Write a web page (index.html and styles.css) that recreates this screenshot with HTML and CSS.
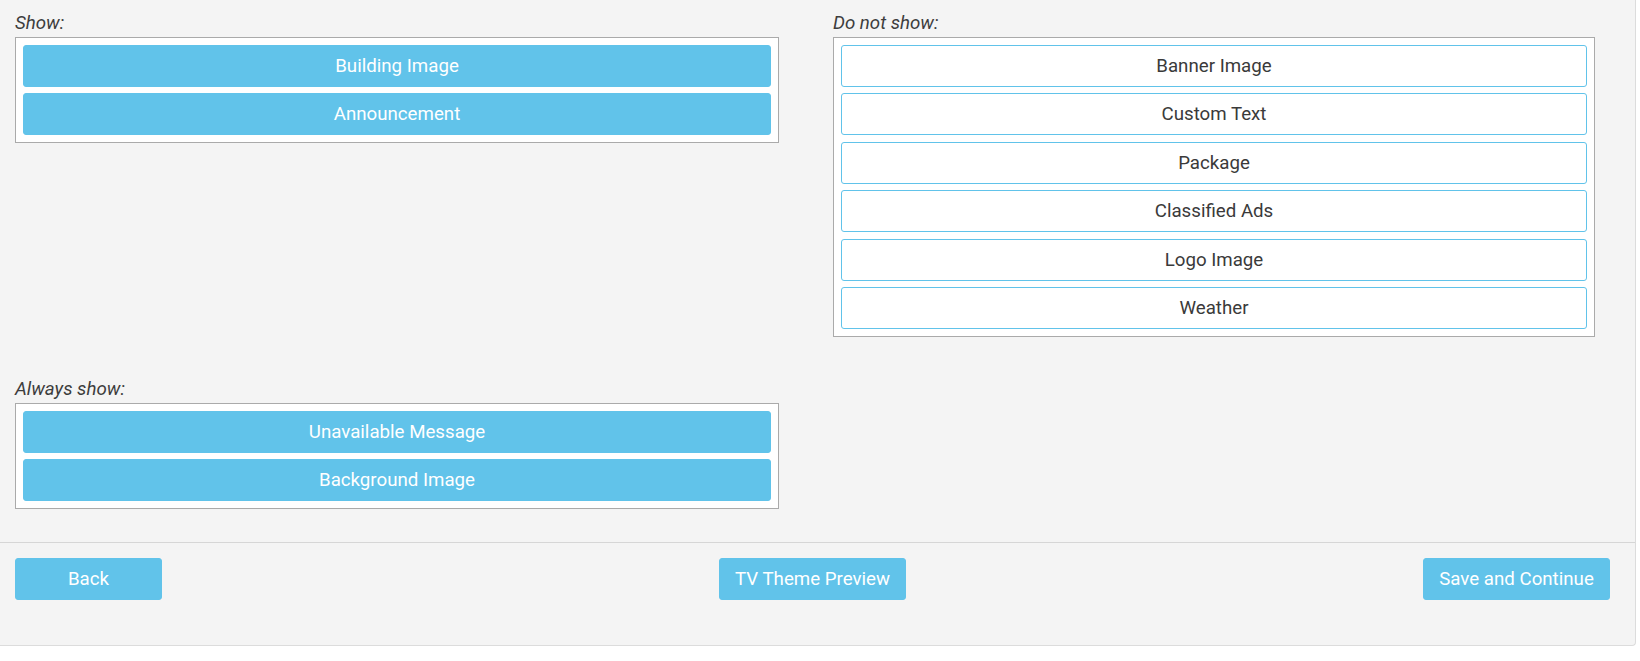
FILE: index.html
```html
<!DOCTYPE html>
<html>
<head>
<meta charset="utf-8">
<link rel="stylesheet" href="styles.css">
</head>
<body>
<div class="panel">
  <div class="content">
    <div class="group">
      <div class="label">Show:</div>
      <div class="box">
        <div class="item on">Building Image</div>
        <div class="item on">Announcement</div>
      </div>
    </div>
    <div class="group">
      <div class="label">Do not show:</div>
      <div class="box">
        <div class="item off">Banner Image</div>
        <div class="item off">Custom Text</div>
        <div class="item off">Package</div>
        <div class="item off">Classified Ads</div>
        <div class="item off">Logo Image</div>
        <div class="item off">Weather</div>
      </div>
    </div>
    <div class="group">
      <div class="label">Always show:</div>
      <div class="box">
        <div class="item on">Unavailable Message</div>
        <div class="item on">Background Image</div>
      </div>
    </div>
  </div>
  <div class="footer">
    <button class="btn btn-back">Back</button>
    <button class="btn btn-mid">TV Theme Preview</button>
    <button class="btn btn-right">Save and Continue</button>
  </div>
</div>
</body>
</html>
```
FILE: styles.css
```css
html, body {
  margin: 0;
  padding: 0;
  background: #ffffff;
  font-family: Roboto, "Liberation Sans", Arial, sans-serif;
  font-size: 18.7px;
}

.panel {
  box-sizing: border-box;
  width: 1636px;
  background: #f4f4f4;
  border-right: 1px solid #dcdcdc;
  border-bottom: 1px solid #dcdcdc;
  border-bottom-right-radius: 4px;
}

.content {
  display: grid;
  grid-template-columns: 764px 762px;
  column-gap: 54px;
  row-gap: 38px;
  align-items: start;
  padding: 9px 0 0 15px;
}

.label {
  font-style: italic;
  color: #3d3d3d;
  line-height: 28px;
  height: 28px;
}

.box {
  box-sizing: border-box;
  background: #ffffff;
  border: 1px solid #aaaaaa;
  padding: 7px;
  display: flex;
  flex-direction: column;
  gap: 6.4px;
}

.item {
  box-sizing: border-box;
  height: 42px;
  border-radius: 3px;
  display: flex;
  align-items: center;
  justify-content: center;
  border: 1px solid #61c3ea;
  white-space: nowrap;
}

.item.on {
  background: #61c3ea;
  color: #ffffff;
}

.item.off {
  background: #ffffff;
  color: #3a3a3a;
}

.footer {
  margin-top: 33px;
  border-top: 1px solid #d6d6d6;
  padding: 15px 25px 45px 15px;
  display: grid;
  grid-template-columns: 1fr auto 1fr;
  align-items: center;
}

.btn {
  box-sizing: border-box;
  height: 42px;
  border: 1px solid #61c3ea;
  border-radius: 3px;
  background: #61c3ea;
  color: #ffffff;
  font-family: Roboto, "Liberation Sans", Arial, sans-serif;
  font-size: 18.7px;
  padding: 0;
  white-space: nowrap;
  cursor: pointer;
}

.btn-back {
  justify-self: start;
  width: 147px;
}

.btn-mid {
  justify-self: center;
  width: 187px;
}

.btn-right {
  justify-self: end;
  width: 187px;
}
```
